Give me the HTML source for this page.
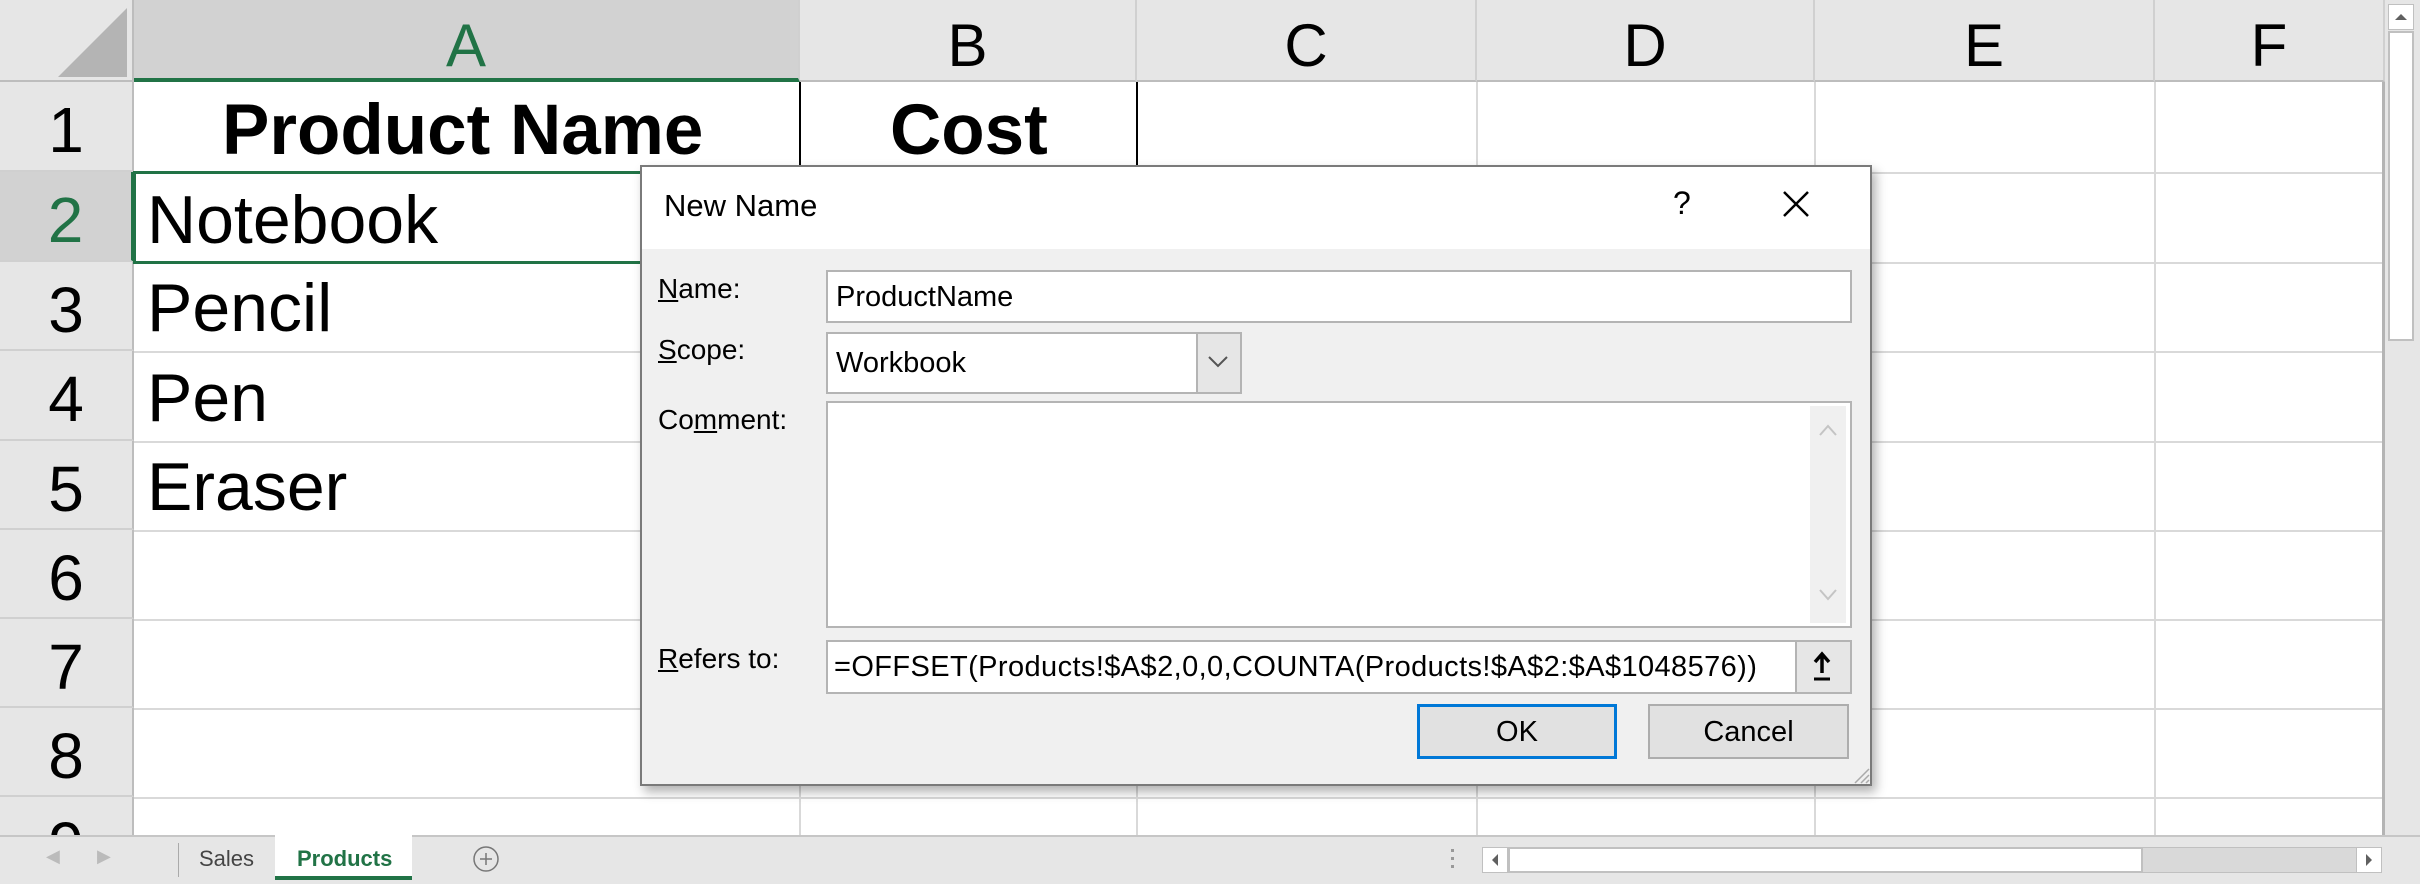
<!DOCTYPE html>
<html><head><meta charset="utf-8"><style>
*{margin:0;padding:0;box-sizing:border-box}
body{width:2420px;height:884px;position:relative;overflow:hidden;background:#fff;font-family:"Liberation Sans",sans-serif}
.a{position:absolute}
.ch{position:absolute;top:0;height:82px;background:#e6e6e6;border-right:2px solid #d0d0d0;border-bottom:2px solid #bdbdbd;font-size:60px;text-align:center;line-height:92px;color:#000}
.rh{position:absolute;left:0;width:134px;background:#e6e6e6;border-bottom:2px solid #d0d0d0;border-right:2px solid #bdbdbd;font-size:64px;text-align:center;color:#000}
.hl{position:absolute;left:134px;width:2250px;height:2px;background:#d9d9d9}
.vl{position:absolute;top:82px;width:2px;height:753px;background:#d9d9d9}
.cell{position:absolute;left:147px;font-size:68px;color:#000}
.dl{position:absolute;font-size:28px;color:#000}
.dl u{text-decoration:underline}
.box{position:absolute;background:#fff;border:2px solid #b4b4b4}
</style></head><body>
<div class="a" style="left:0;top:0;width:134px;height:82px;background:#e6e6e6;border-right:2px solid #bdbdbd;border-bottom:2px solid #bdbdbd"></div>
<svg class="a" style="left:0;top:0" width="134" height="82"><polygon points="58,77 127,8 127,77" fill="#b4b4b4"/></svg>
<div class="ch" style="left:134px;width:666px;background:#d2d2d2;color:#217346;border-bottom:4px solid #217346">A</div>
<div class="ch" style="left:800px;width:337px">B</div>
<div class="ch" style="left:1137px;width:340px">C</div>
<div class="ch" style="left:1477px;width:338px">D</div>
<div class="ch" style="left:1815px;width:340px">E</div>
<div class="ch" style="left:2155px;width:230px">F</div>
<div class="hl" style="top:172px"></div><div class="hl" style="top:262px"></div><div class="hl" style="top:351px"></div><div class="hl" style="top:441px"></div><div class="hl" style="top:530px"></div><div class="hl" style="top:619px"></div><div class="hl" style="top:708px"></div><div class="hl" style="top:797px"></div>
<div class="vl" style="left:799px"></div><div class="vl" style="left:1136px"></div><div class="vl" style="left:1476px"></div><div class="vl" style="left:1814px"></div><div class="vl" style="left:2154px"></div>
<div class="a" style="left:2382px;top:82px;width:3px;height:753px;background:#b4b4b4"></div>
<div class="a" style="left:799px;top:82px;width:2px;height:90px;background:#000"></div>
<div class="a" style="left:1136px;top:82px;width:2px;height:83px;background:#000"></div>
<div class="rh" style="top:82px;height:90px;line-height:96px">1</div>
<div class="rh" style="top:172px;height:90px;line-height:96px;background:#d2d2d2;color:#217346;border-right:3px solid #217346">2</div>
<div class="rh" style="top:262px;height:89px;line-height:96px">3</div>
<div class="rh" style="top:351px;height:90px;line-height:96px">4</div>
<div class="rh" style="top:441px;height:89px;line-height:96px">5</div>
<div class="rh" style="top:530px;height:89px;line-height:96px">6</div>
<div class="rh" style="top:619px;height:89px;line-height:96px">7</div>
<div class="rh" style="top:708px;height:89px;line-height:96px">8</div>
<div class="rh" style="top:797px;height:38px;line-height:96px;overflow:hidden;border-bottom:none">9</div>
<div class="a" style="left:222px;top:90px;font-size:71px;font-weight:bold;line-height:82px">Product Name</div>
<div class="a" style="left:890px;top:90px;font-size:71px;font-weight:bold;line-height:82px">Cost</div>
<div class="a" style="left:133px;top:171px;width:670px;height:93px;border:3px solid #217346"></div>
<div class="cell" style="top:180px;line-height:80px">Notebook</div>
<div class="cell" style="top:268px;line-height:80px">Pencil</div>
<div class="cell" style="top:358px;line-height:80px">Pen</div>
<div class="cell" style="top:447px;line-height:80px">Eraser</div>
<div class="a" style="left:2385px;top:0;width:35px;height:835px;background:#e6e6e6"></div>
<div class="a" style="left:2388px;top:4px;width:26px;height:26px;background:#fff;border:1px solid #c0c0c0"></div>
<svg class="a" style="left:2388px;top:4px" width="26" height="26"><polygon points="7,16 13,10 19,16" fill="#606060"/></svg>
<div class="a" style="left:2388px;top:31px;width:26px;height:310px;background:#fff;border:2px solid #c0c0c0"></div>
<div class="a" style="left:0;top:835px;width:2420px;height:49px;background:#e6e6e6;border-top:2px solid #c6c6c6"></div>
<div class="a" style="left:46px;top:846px;font-size:18px;color:#bbb">◀</div>
<div class="a" style="left:97px;top:846px;font-size:18px;color:#bbb">▶</div>
<div class="a" style="left:178px;top:843px;width:1px;height:34px;background:#aaa"></div>
<div class="a" style="left:199px;top:846px;font-size:22px;color:#444">Sales</div>
<div class="a" style="left:275px;top:835px;width:137px;height:45px;background:#fff;border-bottom:4px solid #217346"></div>
<div class="a" style="left:297px;top:846px;font-size:22px;color:#217346;font-weight:bold">Products</div>
<svg class="a" style="left:471px;top:844px" width="30" height="30"><circle cx="15" cy="15" r="12" fill="none" stroke="#777" stroke-width="1.5"/><path d="M15 9v12M9 15h12" stroke="#777" stroke-width="1.5"/></svg>
<div class="a" style="left:1451px;top:849px;width:3px;height:3px;background:#999;box-shadow:0 8px #999,0 16px #999"></div>
<div class="a" style="left:1482px;top:847px;width:900px;height:26px;background:#d9d9d9;border:1px solid #c0c0c0"></div>
<div class="a" style="left:1482px;top:847px;width:26px;height:26px;background:#fff;border:1px solid #c0c0c0"></div>
<svg class="a" style="left:1482px;top:847px" width="26" height="26"><polygon points="16,7 10,13 16,19" fill="#606060"/></svg>
<div class="a" style="left:1508px;top:847px;width:635px;height:26px;background:#fff;border:2px solid #c0c0c0"></div>
<div class="a" style="left:2356px;top:847px;width:26px;height:26px;background:#fff;border:1px solid #c0c0c0"></div>
<svg class="a" style="left:2356px;top:847px" width="26" height="26"><polygon points="10,7 16,13 10,19" fill="#606060"/></svg>
<div class="a" style="left:640px;top:165px;width:1232px;height:621px;background:#f0f0f0;border:2px solid #7a7a7a;box-shadow:4px 6px 10px rgba(0,0,0,0.3)">
 <div class="a" style="left:0;top:0;width:1228px;height:82px;background:#fff"></div>
</div>
<div class="dl" style="left:664px;top:188px;font-size:31px">New Name</div>
<div class="dl" style="left:1673px;top:185px;font-size:32px">?</div>
<svg class="a" style="left:1781px;top:189px" width="30" height="30"><path d="M3 3L27 27M27 3L3 27" stroke="#000" stroke-width="2.5"/></svg>
<div class="dl" style="left:658px;top:273px"><u>N</u>ame:</div>
<div class="box" style="left:826px;top:270px;width:1026px;height:53px"></div>
<div class="dl" style="left:836px;top:281px;font-size:29px">ProductName</div>
<div class="dl" style="left:658px;top:334px"><u>S</u>cope:</div>
<div class="box" style="left:826px;top:332px;width:416px;height:62px"></div>
<div class="a" style="left:1196px;top:334px;width:44px;height:58px;background:#e6e6e6;border-left:2px solid #b4b4b4"></div>
<svg class="a" style="left:1206px;top:352px" width="24" height="20"><path d="M3 5L12 14L21 5" fill="none" stroke="#555" stroke-width="2"/></svg>
<div class="dl" style="left:836px;top:347px;font-size:29px">Workbook</div>
<div class="dl" style="left:658px;top:404px">Co<u>m</u>ment:</div>
<div class="box" style="left:826px;top:401px;width:1026px;height:227px"></div>
<div class="a" style="left:1810px;top:406px;width:36px;height:217px;background:#f0f0f0"></div>
<svg class="a" style="left:1816px;top:420px" width="24" height="20"><path d="M4 15L12 6L20 15" fill="none" stroke="#c4c4c4" stroke-width="2"/></svg>
<svg class="a" style="left:1816px;top:585px" width="24" height="20"><path d="M4 5L12 14L20 5" fill="none" stroke="#c4c4c4" stroke-width="2"/></svg>
<div class="dl" style="left:658px;top:643px"><u>R</u>efers to:</div>
<div class="box" style="left:826px;top:640px;width:1026px;height:54px"></div>
<div class="a" style="left:1795px;top:642px;width:55px;height:50px;background:#e6e6e6;border-left:2px solid #b4b4b4"></div>
<svg class="a" style="left:1809px;top:649px" width="26" height="36"><path d="M13 5V24M6 13L13 5L20 13" fill="none" stroke="#000" stroke-width="3.5"/><path d="M5 30H21" stroke="#000" stroke-width="3"/></svg>
<div class="dl" style="left:834px;top:651px;font-size:29px;letter-spacing:0.4px;white-space:nowrap">=OFFSET(Products!$A$2,0,0,COUNTA(Products!$A$2:$A$1048576))</div>
<div class="a" style="left:1417px;top:704px;width:200px;height:55px;background:#e1e1e1;border:3px solid #0078d7"></div>
<div class="dl" style="left:1417px;top:716px;width:200px;text-align:center;font-size:29px">OK</div>
<div class="a" style="left:1648px;top:704px;width:201px;height:55px;background:#e1e1e1;border:2px solid #adadad"></div>
<div class="dl" style="left:1648px;top:716px;width:201px;text-align:center;font-size:29px">Cancel</div>
<svg class="a" style="left:1852px;top:766px" width="18" height="18"><path d="M17 3L3 17M17 9L9 17M17 14L14 17" stroke="#aaa" stroke-width="1.5"/></svg>
</body></html>
